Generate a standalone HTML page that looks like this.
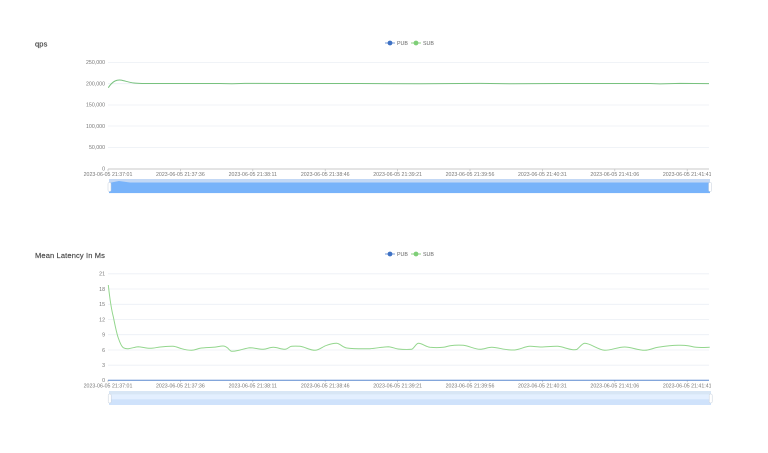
<!DOCTYPE html>
<html><head><meta charset="utf-8">
<style>
html,body{margin:0;padding:0;background:#fff;width:768px;height:453px;overflow:hidden}
svg{display:block;filter:blur(.3px)}
text{font-family:"Liberation Sans",sans-serif}
.a{font-size:5.25px;fill:#777}
.t{font-size:7.5px;fill:#444;letter-spacing:.14px;stroke:#444;stroke-width:.16}
.l{font-size:5.3px;fill:#666}
.g{stroke:#eceff5;stroke-width:.8;fill:none}
.k{stroke:#c0c0c0;stroke-width:.7}
</style></head><body>
<svg width="768" height="453" viewBox="0 0 768 453" xmlns="http://www.w3.org/2000/svg">
<defs><clipPath id="c"><rect x="0" y="0" width="711" height="453"/></clipPath></defs>
<text class="t" x="35" y="46.5">qps</text>
<g>
<path d="M385 43H395" stroke="#a3bce6" stroke-width="1.5"/><circle cx="390" cy="43" r="2.4" fill="#3f72c4"/>
<text class="l" x="397" y="44.8">PUB</text>
<path d="M411 43H421" stroke="#b5e0ae" stroke-width="1.5"/><circle cx="416" cy="43" r="2.4" fill="#7fcf78"/>
<text class="l" x="423" y="44.8">SUB</text>
</g>
<path class="g" d="M108 62.5H709M108 83.7H709M108 105H709M108 126H709M108 147.5H709"/>
<g class="a" text-anchor="end">
<text x="105" y="64">250,000</text><text x="105" y="85.5">200,000</text><text x="105" y="106.7">150,000</text><text x="105" y="128">100,000</text><text x="105" y="149">50,000</text><text x="105" y="170.7">0</text>
</g>
<path d="M108 169H709" stroke="#c8c8c8" stroke-width="1"/>
<path class="k" d="M108 169v2.2M180.4 169v2.2M252.8 169v2.2M325.2 169v2.2M397.6 169v2.2M470 169v2.2M542.4 169v2.2M614.8 169v2.2M687.2 169v2.2"/>
<g class="a" text-anchor="middle" clip-path="url(#c)">
<text x="108" y="176">2023-06-05 21:37:01</text><text x="180.4" y="176">2023-06-05 21:37:36</text><text x="252.8" y="176">2023-06-05 21:38:11</text><text x="325.2" y="176">2023-06-05 21:38:46</text><text x="397.6" y="176">2023-06-05 21:39:21</text><text x="470" y="176">2023-06-05 21:39:56</text><text x="542.4" y="176">2023-06-05 21:40:31</text><text x="614.8" y="176">2023-06-05 21:41:06</text><text x="687.2" y="176">2023-06-05 21:41:41</text>
</g>
<path d="M108.3 87.7C110 85 112 82.5 115 81C117 80 119 79.8 121 80.1C125 80.8 129 82.4 134 83C137 83.4 140 83.4 144 83.5H220L232 83.7L245 83.4L300 83.5L360 83.5L420 83.8L480 83.4L510 83.8L560 83.5L650 83.5L660 83.9L680 83.4L709 83.6" fill="none" stroke="#78c27e" stroke-width="1"/>
<rect x="109" y="179" width="601" height="14.4" fill="#e4eefb"/>
<rect x="109" y="179" width="601" height="4" fill="#c3d8f5"/>
<path d="M109 183L119 181L130 182.5H710V193H109Z" fill="#78b3fa"/>
<rect x="108" y="182.5" width="3" height="9" rx="1.2" fill="#fff" stroke="#c4cedb" stroke-width=".5"/>
<rect x="708.6" y="182.5" width="3" height="9" rx="1.2" fill="#fff" stroke="#c4cedb" stroke-width=".5"/>

<text class="t" x="35" y="258.2">Mean Latency In Ms</text>
<g>
<path d="M385 254H395" stroke="#a3bce6" stroke-width="1.5"/><circle cx="390" cy="254" r="2.4" fill="#3f72c4"/>
<text class="l" x="397" y="255.8">PUB</text>
<path d="M411 254H421" stroke="#b5e0ae" stroke-width="1.5"/><circle cx="416" cy="254" r="2.4" fill="#7fcf78"/>
<text class="l" x="423" y="255.8">SUB</text>
</g>
<path class="g" d="M108 273.8H709M108 289H709M108 304.3H709M108 319.5H709M108 334.7H709M108 350H709M108 365.2H709"/>
<g class="a" text-anchor="end">
<text x="105" y="275.5">21</text><text x="105" y="290.8">18</text><text x="105" y="306">15</text><text x="105" y="321.3">12</text><text x="105" y="336.5">9</text><text x="105" y="351.8">6</text><text x="105" y="367">3</text><text x="105" y="382">0</text>
</g>
<path class="k" d="M108 380v2.2M180.4 380v2.2M252.8 380v2.2M325.2 380v2.2M397.6 380v2.2M470 380v2.2M542.4 380v2.2M614.8 380v2.2M687.2 380v2.2"/>
<g class="a" text-anchor="middle" clip-path="url(#c)">
<text x="108" y="387.5">2023-06-05 21:37:01</text><text x="180.4" y="387.5">2023-06-05 21:37:36</text><text x="252.8" y="387.5">2023-06-05 21:38:11</text><text x="325.2" y="387.5">2023-06-05 21:38:46</text><text x="397.6" y="387.5">2023-06-05 21:39:21</text><text x="470" y="387.5">2023-06-05 21:39:56</text><text x="542.4" y="387.5">2023-06-05 21:40:31</text><text x="614.8" y="387.5">2023-06-05 21:41:06</text><text x="687.2" y="387.5">2023-06-05 21:41:41</text>
</g>
<path d="M108 380.3H709" stroke="#5a88cf" stroke-width="1"/>
<path d="M108.3 285C109.5 296 111 308 113.3 316.7C115 325 116.5 333 118.3 338C120 343 121.5 346.5 123.3 347.7C125 348.6 127 348.8 128.3 348.7C132 348.3 135 346.9 138.3 346.7C142 346.8 146 348.3 150 348.3C154 348.3 158 347 163 346.7C167 346.4 170 346.2 173 346.3C176 346.5 179 348 181.7 348.7C185 349.6 188 350.4 191.7 350.3C195 350.1 197 348.8 200 348.3C204 347.7 209 347.6 213 347.3C217 347 220 346 223 346C225 346 226.5 347 228 348.3C229.5 350 230.5 351.2 231.7 351.3C235 351.4 237 350.6 240 350C243 349.3 247 347.9 250 347.7C254 347.7 259 349.3 263.3 349.3C267 349 270 347.3 273.3 347.3C277 347.3 281 349.3 285 349.3C287.5 349.3 289 346.6 291.7 346.3C294 346 297 346 300 346.3C305 347 310 350.3 315 350.3C319 350.2 323 346.4 326.7 345.3C330 344.2 334 343.2 336.7 343.3C340 343.6 343 347.5 346.7 348C354 348.9 362 348.9 370 348.7C376 348.4 383 346.7 388.3 346.7C392 346.9 395 348.6 398.3 349C402 349.4 408 349.5 411.7 349.3C414 348.5 416 343.5 418.3 343.3C422 343.2 426 346.8 430 347.3C434 347.7 439 347.7 443.3 347.3C446 347 448 346 450 345.7C454 345.2 459 345 463.3 345.3C469 346 475 349.3 480 349.3C484 349.3 488 347.3 491.7 347.3C497 347.3 503 349.4 508 349.7C511 350 512 350.2 514.7 350C520 349.5 525 346.5 529.7 346.3C533 346.1 537 347 541.3 347C546 347 553 346 558 346.3C563 346.8 568 349.3 573 349.7C575 349.9 576 349.9 577 349.3C579.5 347.5 582 343.5 584.7 343.3C590 343.1 598 349.8 604.7 350.3C611 350.3 618 347 624.7 347C631 347 638 350.3 644.7 350.3C650 350.2 653 348 658 347.3C664 346.4 671 345.4 678 345.3C682 345.2 685 345.3 688 345.7C691 346.2 693 347 696.3 347.3C700 347.6 705 347.4 709.7 347.3" fill="none" stroke="#93d68d" stroke-width="1" stroke-linejoin="round"/>
<rect x="109" y="391" width="602" height="14" fill="#e3efff"/>
<rect x="109" y="391" width="602" height="3.4" fill="#d8e6f5"/>
<rect x="109" y="399.3" width="602" height="5.7" fill="#cfe2fb"/>
<rect x="108.2" y="394" width="3" height="9" rx="1.2" fill="#fff" stroke="#c4cedb" stroke-width=".5"/>
<rect x="709.2" y="394" width="3" height="9" rx="1.2" fill="#fff" stroke="#c4cedb" stroke-width=".5"/>
</svg>
</body></html>
